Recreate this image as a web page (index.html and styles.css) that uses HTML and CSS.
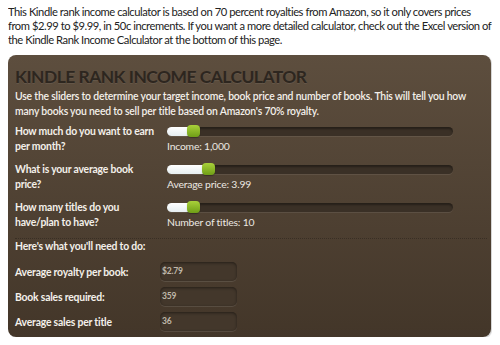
FILE: index.html
```html
<!DOCTYPE html>
<html>
<head>
<meta charset="utf-8">
<link rel="stylesheet" href="styles.css">
</head>
<body>
<p class="intro">This Kindle rank income calculator is based on 70 percent royalties from Amazon, so it only covers prices from $2.99 to $9.99, in 50c increments. If you want a more detailed calculator, check out the Excel version of the Kindle Rank Income Calculator at the bottom of this page.</p>
<div class="panel">
  <h1 class="title">Kindle Rank Income Calculator</h1>
  <p class="desc">Use the sliders to determine your target income, book price and number of books. This will tell you how many books you need to sell per title based on Amazon's 70% royalty.</p>
  <div class="row">
    <div class="label">How much do you want to earn per month?</div>
    <div class="control">
      <div class="slider"><div class="track"><div class="fill" style="width:9%"></div><div class="handle" style="left:7%"></div></div></div>
      <div class="value">Income: 1,000</div>
    </div>
  </div>
  <div class="row">
    <div class="label">What is your average book price?</div>
    <div class="control">
      <div class="slider"><div class="track"><div class="fill" style="width:14.5%"></div><div class="handle" style="left:12.3%"></div></div></div>
      <div class="value">Average price: 3.99</div>
    </div>
  </div>
  <div class="row">
    <div class="label">How many titles do you have/plan to have?</div>
    <div class="control">
      <div class="slider"><div class="track"><div class="fill" style="width:9%"></div><div class="handle" style="left:7%"></div></div></div>
      <div class="value">Number of titles: 10</div>
    </div>
  </div>
  <div class="sep"></div>
  <div class="need">Here's what you'll need to do:</div>
  <div class="results">
    <div class="rlabel">Average royalty per book:</div><div class="out">$2.79</div>
    <div class="rlabel">Book sales required:</div><div class="out">359</div>
    <div class="rlabel">Average sales per title</div><div class="out">36</div>
  </div>
</div>
</body>
</html>
```
FILE: styles.css
```css
html, body { background: #ffffff; }
body {
  margin: 5px 8px 0 8px;
  font-family: Lato, "Open Sans", sans-serif;
  color: #222;
}
.intro {
  margin: 0;
  font-size: 11.2px;
  line-height: 14px;
  letter-spacing: -0.45px;
  width: 486px;
}
.panel {
  margin-top: 8px;
  width: 483px;
  height: 282px;
  box-sizing: border-box;
  padding: 10.5px 7px 0 7px;
  border-radius: 8px;
  background: linear-gradient(#5d4e3e, #433629);
  box-shadow: 1px 1px 1px rgba(0,0,0,0.18);
  color: #f4f0ea;
  letter-spacing: -0.2px;
}
.title {
  margin: 0;
  font-size: 17.4px;
  line-height: 21px;
  font-weight: 700;
  text-transform: uppercase;
  color: #2d261f;
  letter-spacing: -0.5px;
  text-shadow: 0 1px 0 rgba(255,255,255,0.08);
}
.desc {
  margin: 2.5px 0 0 0;
  font-size: 10.4px;
  line-height: 14.5px;
  font-weight: 600;
}
.row {
  display: grid;
  grid-template-columns: 152px 286px;
  margin-top: 8px;
}
.row:first-of-type { margin-top: 5.5px; }
.label {
  font-size: 10.4px;
  line-height: 15px;
  font-weight: 700;
  width: 145px;
}
.slider {
  height: 15px;
  display: flex;
  align-items: center;
}
.track {
  position: relative;
  width: 100%;
  height: 9px;
  border-radius: 5px;
  background: #3a3026;
  box-shadow: inset 0 2px 2px rgba(0,0,0,0.35), 0 1px 0 rgba(255,255,255,0.08);
}
.fill {
  height: 100%;
  border-radius: 5px 0 0 5px;
  background: linear-gradient(#ffffff, #e6eef0);
}
.handle {
  position: absolute;
  top: -2px;
  width: 13px;
  height: 12px;
  border-radius: 4px;
  background: linear-gradient(#a9d13a, #6f9e16);
  box-shadow: 0 1px 1px rgba(0,0,0,0.3);
}
.value {
  font-size: 10.4px;
  line-height: 15px;
  color: #ece8e2;
}
.sep {
  margin-top: 8.5px;
  border-top: 1px dotted rgba(0,0,0,0.25);
  width: 472px;
}
.need {
  font-size: 10.4px;
  line-height: 15px;
  font-weight: 700;
}
.results {
  margin-top: 8px;
  display: grid;
  grid-template-columns: 145px 77px;
  row-gap: 6px;
  align-items: center;
}
.rlabel {
  font-size: 10.4px;
  font-weight: 700;
  line-height: 16px;
}
.out {
  height: 19px;
  box-sizing: border-box;
  padding-left: 2px;
  border-radius: 5px;
  background: #43372b;
  box-shadow: inset 0 1px 3px rgba(0,0,0,0.45), 0 1px 0 rgba(255,255,255,0.1);
  font-size: 8.5px;
  font-weight: 700;
  line-height: 19px;
  color: #bfb7aa;
}
```
